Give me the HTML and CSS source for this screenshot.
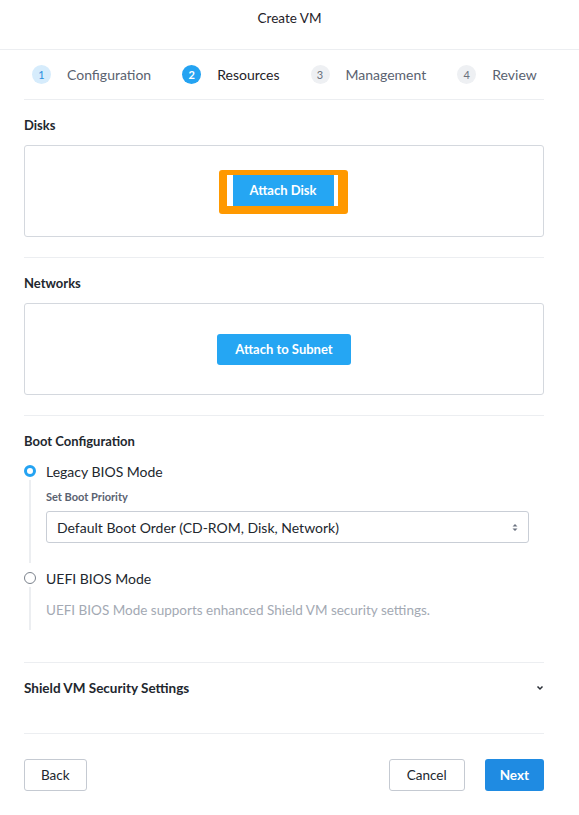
FILE: index.html
```html
<!DOCTYPE html>
<html>
<head>
<meta charset="utf-8">
<link rel="stylesheet" href="styles.css">
</head>
<body>
<div class="page">
  <header class="header">Create VM</header>
  <div class="content">
    <nav class="stepper">
      <div class="step done"><span class="num">1</span><span class="lbl">Configuration</span></div>
      <div class="step active"><span class="num">2</span><span class="lbl">Resources</span></div>
      <div class="step"><span class="num">3</span><span class="lbl">Management</span></div>
      <div class="step"><span class="num">4</span><span class="lbl">Review</span></div>
    </nav>

    <section class="section">
      <h3 class="sec-title">Disks</h3>
      <div class="box">
        <span class="highlight"><span class="hl-inner"><button class="btn-primary btn-disk">Attach Disk</button></span></span>
      </div>
    </section>

    <section class="section">
      <h3 class="sec-title">Networks</h3>
      <div class="box">
        <button class="btn-primary">Attach to Subnet</button>
      </div>
    </section>

    <section class="section boot">
      <h3 class="sec-title">Boot Configuration</h3>
      <div class="radio-row"><span class="radio checked"></span><span class="radio-lbl">Legacy BIOS Mode</span></div>
      <div class="radio-body legacy">
        <div class="field-lbl">Set Boot Priority</div>
        <div class="select"><span>Default Boot Order (CD-ROM, Disk, Network)</span>
          <svg class="arrows" width="6" height="9" viewBox="0 0 6 9"><path d="M0.5 3.5 L3 1 L5.5 3.5 Z M0.5 5.5 L3 8 L5.5 5.5 Z" fill="#6b7280"/></svg>
        </div>
      </div>
      <div class="radio-row uefi"><span class="radio"></span><span class="radio-lbl">UEFI BIOS Mode</span></div>
      <div class="radio-body uefi-body">
        <div class="hint">UEFI BIOS Mode supports enhanced Shield VM security settings.</div>
      </div>
    </section>

    <section class="collapse">
      <span class="collapse-title">Shield VM Security Settings</span>
      <svg width="8" height="6" viewBox="0 0 8 6"><path d="M1.5 1.5 L4 4 L6.5 1.5" stroke="#2a2f36" stroke-width="1.5" fill="none"/></svg>
    </section>

    <footer class="footer">
      <button class="btn-outline btn-back">Back</button>
      <div class="right">
        <button class="btn-outline btn-cancel">Cancel</button>
        <button class="btn-next">Next</button>
      </div>
    </footer>
  </div>
</div>
</body>
</html>
```
FILE: styles.css
```css
* { box-sizing: border-box; }
body { margin: 0; font-family: "Lato", "Open Sans", sans-serif; color: #22272e; background: #fff; }
.page { width: 579px; }
.header { height: 50px; border-bottom: 1px solid #eceef1; text-align: center; font-size: 13.5px; padding-top: 10px; color: #1f2329; }
.content { padding: 0 24px; width: 568px; }
.stepper { display: flex; align-items: center; height: 50px; border-bottom: 1px solid #eceef1; padding-left: 8px; gap: 0; }
.step { display: flex; align-items: center; font-size: 14px; color: #5a6270; }
.step .num { width: 19px; height: 19px; border-radius: 50%; background: #eef0f3; color: #6a717c; font-size: 11px; display: flex; align-items: center; justify-content: center; margin-right: 16px; }
.step:nth-child(1) { margin-right: 31px; }
.step:nth-child(2) { margin-right: 31px; }
.step:nth-child(3) { margin-right: 31px; }
.step.done .num { background: #d6ecfc; color: #2a8fe0; }
.step.active .num { background: #24a3f2; color: #fff; font-weight: 700; }
.step.active .lbl { color: #1f2329; }
.section { border-bottom: 1px solid #eceef1; padding: 17px 0 20px; }
.sec-title { margin: 0 0 12px; font-size: 13px; font-weight: 700; color: #22272e; }
.box { height: 92px; border: 1px solid #d4d8de; border-radius: 3px; display: flex; align-items: center; justify-content: center; }
.btn-primary { border: none; background: #25a6f3; color: #fff; font-family: inherit; font-size: 13px; font-weight: 700; height: 31px; padding: 0 18px; border-radius: 3px; }
.highlight { display: inline-block; background: #ff9900; padding: 5px 10px 8px 8px; border-radius: 3px; margin-right: 2px; margin-top: 1px; }
.hl-inner { display: block; background: #fff; padding: 0 4px 0 6px; }
.btn-disk { border-radius: 0; width: 101px; padding: 0; display: block; }
.boot { border-bottom: 1px solid #eceef1; padding-bottom: 32px; }
.boot .sec-title { margin-bottom: 13px; }
.radio-row { display: flex; align-items: center; height: 18px; }
.radio { width: 12px; height: 12px; border-radius: 50%; border: 1.5px solid #7b828c; margin-right: 10px; display: inline-block; }
.radio.checked { border: 3.5px solid #24a3f2; background: #fff; }
.radio-lbl { font-size: 14px; color: #22272e; }
.radio-body { margin-left: 5px; border-left: 2px solid #eceef1; padding-left: 15px; }
.legacy { padding-top: 10px; padding-bottom: 20px; margin-bottom: 6px; }
.field-lbl { font-size: 11px; font-weight: 700; color: #5a6270; margin-bottom: 8px; }
.select { height: 32px; width: 483px; border: 1px solid #c9ced6; border-radius: 3px; display: flex; align-items: center; justify-content: space-between; padding: 0 10px 0 10px; font-size: 14px; color: #22272e; }
.uefi-body { padding-top: 15px; padding-bottom: 12px; }
.hint { font-size: 13.5px; color: #a3a9b3; }
.collapse { display: flex; align-items: center; justify-content: space-between; height: 71px; padding: 0 0 20px; border-bottom: 1px solid #eceef1; }
.collapse-title { font-size: 13.5px; font-weight: 700; color: #22272e; }
.footer { display: flex; justify-content: space-between; padding-top: 25px; }
.right { display: flex; gap: 20px; }
.btn-outline { height: 32px; border: 1px solid #c5cad2; background: #fff; border-radius: 3px; font-family: inherit; font-size: 13.5px; color: #22272e; padding: 0 16px; }
.btn-cancel { padding: 0 17px; }
.btn-next { height: 32px; border: none; background: #1f8be2; color: #fff; border-radius: 3px; font-family: inherit; font-size: 13.5px; font-weight: 700; padding: 0 15px; }
```
